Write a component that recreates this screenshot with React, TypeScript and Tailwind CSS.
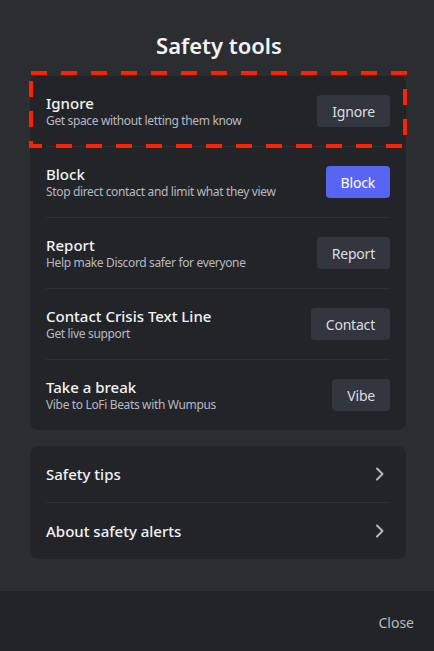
import React from "react";

const rows = [
  { title: "Ignore", sub: "Get space without letting them know", btn: "Ignore", primary: false },
  { title: "Block", sub: "Stop direct contact and limit what they view", btn: "Block", primary: true },
  { title: "Report", sub: "Help make Discord safer for everyone", btn: "Report", primary: false },
  { title: "Contact Crisis Text Line", sub: "Get live support", btn: "Contact", primary: false },
  { title: "Take a break", sub: "Vibe to LoFi Beats with Wumpus", btn: "Vibe", primary: false },
];

const links = ["Safety tips", "About safety alerts"];

function Chevron() {
  return (
    <svg width="12" height="16" viewBox="0 0 12 16" fill="none">
      <path d="M3 2.5 L8.5 8 L3 13.5" stroke="#b5bac1" strokeWidth="2" strokeLinecap="round" strokeLinejoin="round" />
    </svg>
  );
}

export default function App() {
  return (
    <div
      className="relative w-[434px] h-[651px] bg-[#2b2d31] flex flex-col overflow-hidden"
      style={{ fontFamily: '"Noto Sans", "Open Sans", sans-serif' }}
    >
      <div className="flex-1 pl-[30px] pr-[28px]">
        <h1 className="pt-[32px] text-center text-[22px] leading-[26px] font-semibold text-[#f2f3f5] pl-[2px]">
          Safety tools
        </h1>
        <div className="mt-[18px] bg-[#232428] rounded-lg">
          {rows.map((r, i) => (
            <div key={r.title} className="px-4">
              <div
                className={
                  "flex items-center justify-between " +
                  (i < rows.length - 1 ? "border-b border-[#2e2f34] h-[71px]" : "h-[70px]")
                }
              >
                <div className="flex flex-col">
                  <span className="text-[15px] leading-[20px] font-medium text-[#f2f3f5]">{r.title}</span>
                  <span className="text-[12px] leading-[16px] tracking-[-0.35px] text-[#b5bac1]">{r.sub}</span>
                </div>
                <button
                  className={
                    "h-[32px] px-[15px] rounded-[4px] text-[14px] tracking-[-0.2px] " +
                    (r.primary ? "bg-[#5865f2] text-white" : "bg-[#33353f] text-[#dbdee1]")
                  }
                >
                  {r.btn}
                </button>
              </div>
            </div>
          ))}
        </div>
        <div className="mt-[16px] bg-[#232428] rounded-lg">
          {links.map((l, i) => (
            <div key={l} className="px-4">
              <div
                className={
                  "flex items-center justify-between " +
                  (i < links.length - 1 ? "h-[57px] border-b border-[#2e2f34]" : "h-[56px]")
                }
              >
                <span className="text-[15px] font-medium text-[#f2f3f5]">{l}</span>
                <div className="pr-[4px]">
                  <Chevron />
                </div>
              </div>
            </div>
          ))}
        </div>
      </div>
      <div className="h-[60px] bg-[#232428] flex items-center justify-end pr-[20px] pt-[3px]">
        <span className="text-[14px] text-[#b5bac1]">Close</span>
      </div>
      <svg className="absolute left-0 top-0 pointer-events-none" width="434" height="200">
        <rect
          x="31"
          y="73"
          width="374"
          height="73"
          fill="none"
          stroke="#ff2200"
          strokeWidth="4"
          strokeDasharray="16 14"
        />
      </svg>
    </div>
  );
}
